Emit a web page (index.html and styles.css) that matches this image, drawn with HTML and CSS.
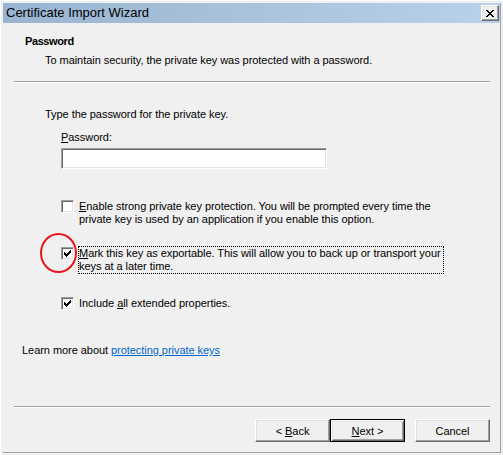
FILE: index.html
```html
<!DOCTYPE html>
<html lang="en">
<head>
<meta charset="utf-8">
<title>Certificate Import Wizard</title>
<link rel="stylesheet" href="styles.css">
</head>
<body>
<div class="window">
  <div class="frame">
    <div class="titlebar">
      <span class="title">Certificate Import Wizard</span>
      <span class="close" aria-label="Close">
        <svg width="8" height="7" viewBox="0 0 8 7" shape-rendering="crispEdges"><path d="M0 0h2v1h-2zM6 0h2v1h-2zM1 1h2v1h-2zM5 1h2v1h-2zM2 2h4v1h-4zM3 3h2v1h-2zM2 4h4v1h-4zM1 5h2v1h-2zM5 5h2v1h-2zM0 6h2v1h-2zM6 6h2v1h-2z" fill="#000"/></svg>
      </span>
    </div>

    <div class="header">
      <div class="h-title">Password</div>
      <div class="h-sub">To maintain security, the private key was protected with a password.</div>
    </div>
    <div class="etch"></div>

    <div class="content">
      <p class="prompt">Type the password for the private key.</p>
      <div class="field">
        <label class="field-label" for="pw"><u>P</u>assword:</label>
        <input class="input" id="pw" type="password">
      </div>

      <div class="options">
        <div class="check-row r1">
          <span class="box"></span>
          <span class="label key-first">Enable strong private key protection. You will be prompted every time the private key is used by an application if you enable this option.</span>
        </div>
        <div class="check-row r2">
          <span class="box"><svg width="7" height="7" viewBox="0 0 7 7" shape-rendering="crispEdges"><path d="M6 0h1v1h-1zM5 1h2v1h-2zM0 2h1v1h-1zM4 2h3v1h-3zM0 3h2v1h-2zM3 3h3v1h-3zM0 4h5v1h-5zM1 5h3v1h-3zM2 6h1v1h-1z" fill="#000"/></svg></span>
          <span class="label key-first focused">Mark this key as exportable. This will allow you to back up or transport your keys at a later time.</span>
          <span class="annotation"></span>
        </div>
        <div class="check-row r3">
          <span class="box"><svg width="7" height="7" viewBox="0 0 7 7" shape-rendering="crispEdges"><path d="M6 0h1v1h-1zM5 1h2v1h-2zM0 2h1v1h-1zM4 2h3v1h-3zM0 3h2v1h-2zM3 3h3v1h-3zM0 4h5v1h-5zM1 5h3v1h-3zM2 6h1v1h-1z" fill="#000"/></svg></span>
          <span class="label">Include <u>a</u>ll extended properties.</span>
        </div>
      </div>

      <p class="learn">Learn more about <a href="#">protecting private keys</a></p>
    </div>

    <div class="etch bottom"></div>
    <div class="footer">
      <button class="btn" type="button">&lt; <u>B</u>ack</button>
      <button class="btn default" type="button"><u>N</u>ext &gt;</button>
      <button class="btn cancel" type="button">Cancel</button>
    </div>
  </div>
</div>
</body>
</html>
```

FILE: styles.css
```css
html, body {
  margin: 0;
  padding: 0;
}

body {
  background: #f0f0f0;
  font-family: "Liberation Sans", Arial, sans-serif;
  font-size: 11px;
  line-height: 13px;
  letter-spacing: -0.05px;
  color: #000;
}

.window {
  width: 503px;
  height: 455px;
  box-sizing: border-box;
  background: #f0f0f0;
  border-top: 1px solid #ffffff;
  border-left: 1px solid #ffffff;
  padding: 2px;
}

.frame {
  height: 100%;
  box-sizing: border-box;
  display: flex;
  flex-direction: column;
  border-right: 1px solid #a0a0a0;
  border-bottom: 1px solid #a0a0a0;
}

/* Title bar */
.titlebar {
  height: 20px;
  flex: none;
  display: flex;
  align-items: center;
  justify-content: space-between;
  padding-left: 3px;
  padding-right: 1px;
  background: linear-gradient(to right, #99b4d1, #b9d1ea);
}

.title {
  font-size: 13px;
  letter-spacing: 0;
  line-height: 16px;
}

.close {
  width: 18px;
  height: 16px;
  box-sizing: border-box;
  display: flex;
  align-items: center;
  justify-content: center;
  background: #f0f0f0;
  border: 1px solid;
  border-color: #ffffff #696969 #696969 #ffffff;
  box-shadow: inset -1px -1px #a0a0a0, inset 1px 1px #e3e3e3;
}

/* Header */
.header {
  padding: 12px 0 0 22px;
}

.h-title {
  font-weight: bold;
  letter-spacing: -0.4px;
}

.h-sub {
  margin-top: 6px;
  padding-left: 20px;
}

.etch {
  flex: none;
  height: 0;
  border-top: 1px solid #a0a0a0;
  border-bottom: 1px solid #ffffff;
  margin: 14px 10px 0 11px;
}

.etch.bottom {
  margin-top: 0;
}

/* Content */
.content {
  flex: 1;
  padding-left: 19px;
}

.prompt {
  margin: 25px 0 0 23px;
}

.field {
  margin: 10px 0 0 39px;
  display: flex;
  flex-direction: column;
  align-items: flex-start;
}

.input {
  margin: 4px 0 0;
  padding: 0;
  width: 266px;
  height: 21px;
  box-sizing: border-box;
  background: #ffffff;
  border: 1px solid;
  border-color: #a0a0a0 #ffffff #ffffff #a0a0a0;
  box-shadow: inset 1px 1px #696969, inset -1px -1px #e3e3e3;
  outline: none;
}

.options {
  margin-left: 39px;
}

.check-row {
  position: relative;
  display: flex;
  align-items: flex-start;
}

.check-row.r1 { margin-top: 30px; }
.check-row.r2 { margin-top: 19px; }
.check-row.r3 { margin-top: 22px; }

.box {
  flex: none;
  width: 13px;
  height: 13px;
  margin-top: 1px;
  box-sizing: border-box;
  display: flex;
  align-items: center;
  justify-content: center;
  background: #ffffff;
  border: 1px solid;
  border-color: #a0a0a0 #ffffff #ffffff #a0a0a0;
  box-shadow: inset 1px 1px #696969, inset -1px -1px #e3e3e3;
}

.label {
  width: 366px;
  box-sizing: border-box;
  margin-left: 4px;
  border: 1px dotted transparent;
}

.label.key-first::first-letter {
  text-decoration: underline;
}

.label.focused {
  border-color: #000;
}

.annotation {
  position: absolute;
  left: -21px;
  top: -13px;
  width: 37px;
  height: 40px;
  box-sizing: border-box;
  border: 2px solid #e8141c;
  border-radius: 50%;
  pointer-events: none;
}

.learn {
  margin: 33px 0 0 0;
}

.learn a {
  color: #0066cc;
  text-decoration: underline;
}

/* Footer */
.footer {
  flex: none;
  display: flex;
  justify-content: flex-end;
  padding: 11px 10px 10px 0;
}

.btn {
  width: 75px;
  height: 23px;
  box-sizing: border-box;
  padding: 0;
  margin: 0;
  font-family: "Liberation Sans", Arial, sans-serif;
  font-size: 11px;
  letter-spacing: -0.05px;
  color: #000;
  background: #f0f0f0;
  border: 1px solid;
  border-color: #ffffff #696969 #696969 #ffffff;
  box-shadow: inset -1px -1px #a0a0a0, inset 1px 1px #e3e3e3;
}

.btn.default {
  border: 1px solid #000;
  box-shadow: inset 1px 1px #ffffff, inset -1px -1px #696969, inset 2px 2px #e3e3e3, inset -2px -2px #a0a0a0;
}

.btn.cancel {
  margin-left: 10px;
}
```
